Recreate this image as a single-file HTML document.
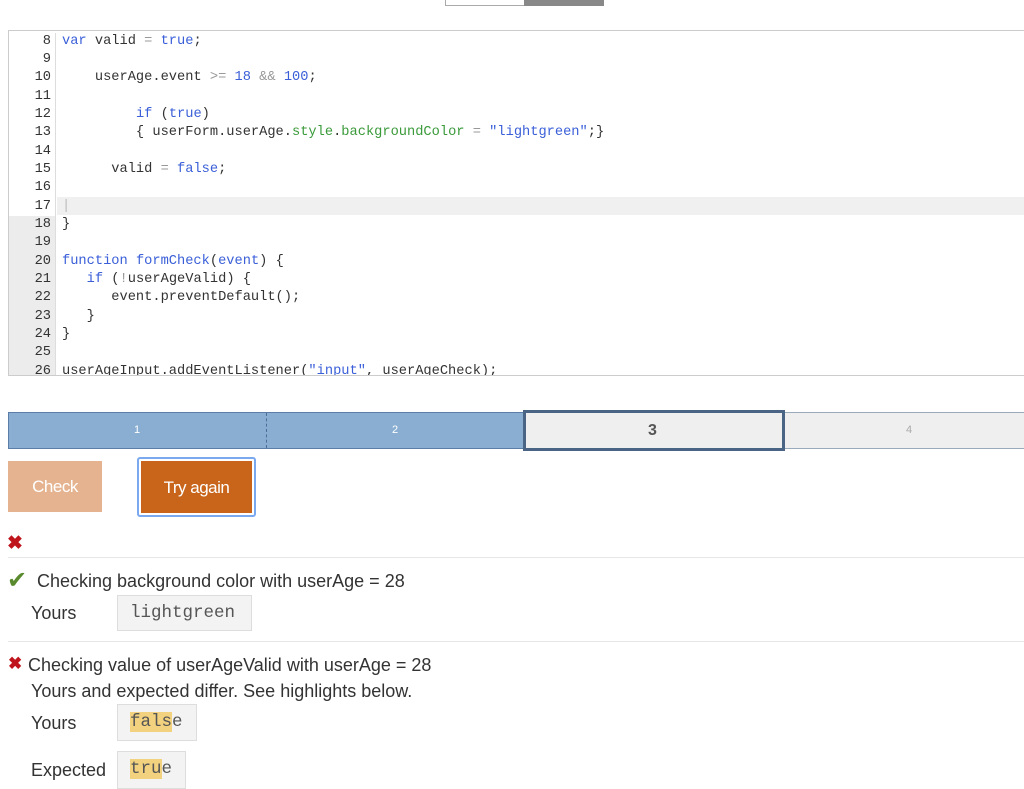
<!DOCTYPE html>
<html><head><meta charset="utf-8"><style>
*{margin:0;padding:0;box-sizing:border-box}
body{width:1024px;height:789px;overflow:hidden;background:#fff;font-family:"Liberation Sans",sans-serif;color:#333;position:relative}
.abs{position:absolute}
.ed{left:8px;top:30px;width:1020px;height:346px;border:1px solid #ccc;overflow:hidden;background:#fff}
.ln{position:absolute;left:0;width:1020px;height:18.33px;font-family:"Liberation Mono",monospace;font-size:13.7px;line-height:18.33px;white-space:pre;color:#333}
.ln .g{display:inline-block;width:47px;text-align:right;padding-right:4px;color:#333;border-right:1px solid #ddd;height:18.33px}
.ln .c{padding-left:6px}
.k{color:#3a5fd8}.n{color:#3a5fd8}.o{color:#999}.s{color:#3a5fd8}.p{color:#3a9a3a}
.gray .g{background:#ececec}
.txt{font-size:18px;color:#333}
.box{position:absolute;background:#f3f3f3;border:1px solid #ddd;font-family:"Liberation Mono",monospace;font-size:17.5px;color:#555;padding:0 12px}
.hl{background:#f3d27f}
</style></head><body>
<div class="abs" style="left:445px;top:0;width:80px;height:6px;border:1px solid #aaa;border-top:none;background:#fff"></div>
<div class="abs" style="left:524px;top:0;width:80px;height:6px;background:#888"></div>

<div class="abs ed">
<div class="abs" style="left:48px;top:166px;width:980px;height:18px;background:#f0f0f0"></div>
<div class="ln" style="top:1.5px"><span class="g">8</span><span class="c"><span class="k">var</span> valid <span class="o">=</span> <span class="k">true</span>;</span></div>
<div class="ln" style="top:19.8px"><span class="g">9</span></div>
<div class="ln" style="top:38.2px"><span class="g">10</span><span class="c">    userAge.event <span class="o">&gt;=</span> <span class="n">18</span> <span class="o">&amp;&amp;</span> <span class="n">100</span>;</span></div>
<div class="ln" style="top:56.5px"><span class="g">11</span></div>
<div class="ln" style="top:74.8px"><span class="g">12</span><span class="c">         <span class="k">if</span> (<span class="k">true</span>)</span></div>
<div class="ln" style="top:93.2px"><span class="g">13</span><span class="c">         { userForm.userAge.<span class="p">style</span>.<span class="p">backgroundColor</span> <span class="o">=</span> <span class="s">"lightgreen"</span>;}</span></div>
<div class="ln" style="top:111.5px"><span class="g">14</span></div>
<div class="ln" style="top:129.8px"><span class="g">15</span><span class="c">      valid <span class="o">=</span> <span class="k">false</span>;</span></div>
<div class="ln" style="top:148.2px"><span class="g">16</span></div>
<div class="ln" style="top:166.5px"><span class="g">17</span><span class="c" style="color:#bbb">|</span></div>
<div class="ln gray" style="top:184.8px"><span class="g">18</span><span class="c">}</span></div>
<div class="ln gray" style="top:203.2px"><span class="g">19</span></div>
<div class="ln gray" style="top:221.5px"><span class="g">20</span><span class="c"><span class="k">function</span> <span class="k">formCheck</span>(<span class="k">event</span>) {</span></div>
<div class="ln gray" style="top:239.8px"><span class="g">21</span><span class="c">   <span class="k">if</span> (<span class="o">!</span>userAgeValid) {</span></div>
<div class="ln gray" style="top:258.2px"><span class="g">22</span><span class="c">      event.preventDefault();</span></div>
<div class="ln gray" style="top:276.5px"><span class="g">23</span><span class="c">   }</span></div>
<div class="ln gray" style="top:294.8px"><span class="g">24</span><span class="c">}</span></div>
<div class="ln gray" style="top:313.2px"><span class="g">25</span></div>
<div class="ln gray" style="top:331.5px"><span class="g">26</span><span class="c">userAgeInput.addEventListener(<span class="s">"input"</span>, userAgeCheck);</span></div>
</div>

<div class="abs" style="left:8px;top:412px;width:516px;height:37px;background:#8aaed1;border:1px solid #5a7ea8"></div>
<div class="abs" style="left:266px;top:413px;height:35px;border-left:1px dashed #4a6e98"></div>
<div class="abs" style="left:784px;top:412px;width:240px;height:37px;background:#efefef;border:1px solid #9ab;border-right:none"></div>
<div class="abs" style="left:523px;top:410px;width:262px;height:41px;background:#efefef;border:3px solid #4a6485"></div>
<div class="abs" style="left:134px;top:424px;font-size:11px;color:#fff">1</div>
<div class="abs" style="left:392px;top:424px;font-size:11px;color:#fff">2</div>
<div class="abs" style="left:648px;top:422px;font-size:16px;font-weight:bold;color:#555">3</div>
<div class="abs" style="left:906px;top:424px;font-size:11px;color:#aaa">4</div>

<div class="abs" style="left:8px;top:461px;width:94px;height:51px;background:#e5b38f;color:#fff;font-size:17px;text-align:center;line-height:52px;letter-spacing:-0.5px">Check</div>
<div class="abs" style="left:137px;top:457px;width:119px;height:60px;border:2px solid #7aa9f0;border-radius:3px"></div>
<div class="abs" style="left:141px;top:461px;width:111px;height:52px;background:#c8651b;color:#fff;font-size:17px;text-align:center;line-height:53px;letter-spacing:-0.5px">Try again</div>

<div class="abs" style="left:7px;top:532px;font-size:19px;color:#c0141c;font-weight:bold">✖</div>
<div class="abs" style="left:8px;top:557px;width:1016px;border-top:1px solid #e6e6e6"></div>
<div class="abs" style="left:7px;top:566px;font-size:24px;color:#5a8a2e">✔</div>
<div class="abs txt" style="left:37px;top:571px">Checking background color with userAge = 28</div>
<div class="abs txt" style="left:31px;top:603px">Yours</div>
<div class="box" style="left:117px;top:595px;width:135px;height:36px;line-height:34px">lightgreen</div>
<div class="abs" style="left:8px;top:641px;width:1016px;border-top:1px solid #e6e6e6"></div>
<div class="abs" style="left:8px;top:654px;font-size:17px;color:#c0141c;font-weight:bold">✖</div>
<div class="abs txt" style="left:28px;top:655px">Checking value of userAgeValid with userAge = 28</div>
<div class="abs txt" style="left:31px;top:681px">Yours and expected differ. See highlights below.</div>
<div class="abs txt" style="left:31px;top:713px">Yours</div>
<div class="box" style="left:117px;top:704px;width:80px;height:37px;line-height:35px"><span class="hl">fals</span>e</div>
<div class="abs txt" style="left:31px;top:760px">Expected</div>
<div class="box" style="left:117px;top:751px;width:69px;height:38px;line-height:34px"><span class="hl">tru</span>e</div>
</body></html>
